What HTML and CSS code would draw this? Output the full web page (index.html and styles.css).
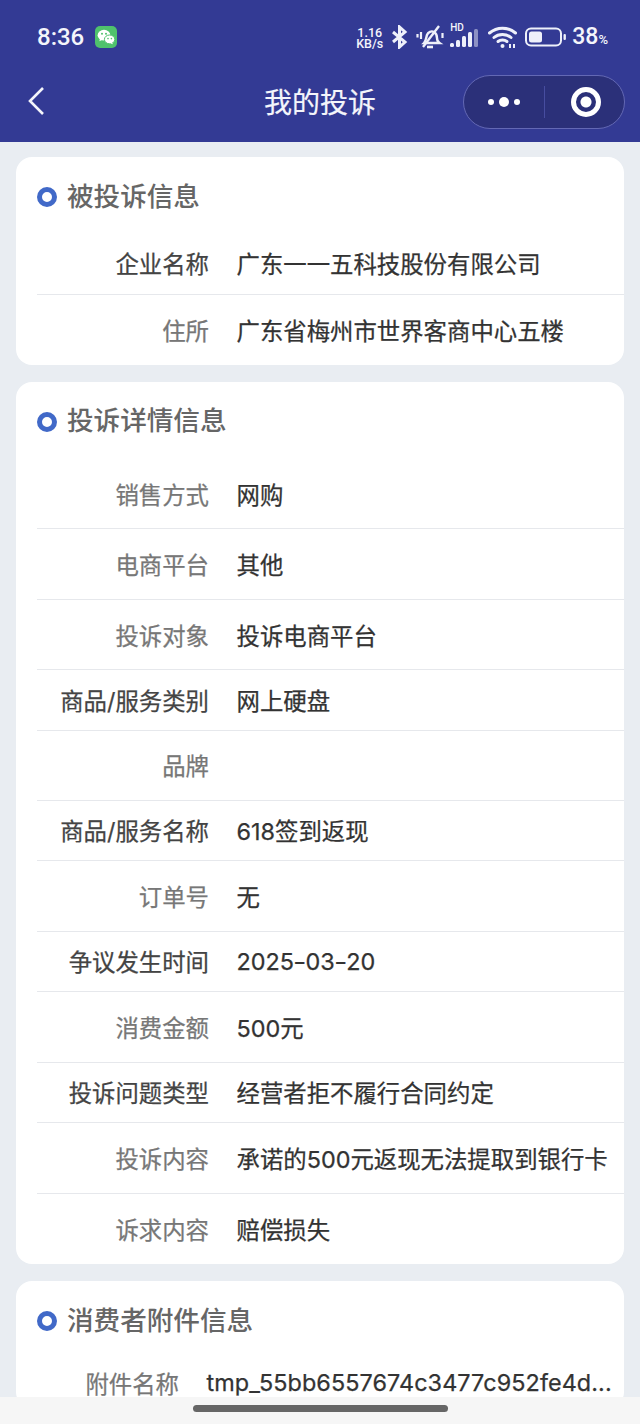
FILE: index.html
```html
<!DOCTYPE html>
<html lang="zh-CN">

<head>
    <meta charset="UTF-8">
    <meta name="viewport" content="width=device-width, initial-scale=1.0">
    <title>我的投诉</title>
    <link rel="stylesheet" href="styles.css">
</head>

<body>

    <div class="top-bar">
        <div class="status-bar">
            <div class="status-left">
                <span class="clock">8:36</span>
                <svg class="wechat" width="22" height="22" viewBox="0 0 22 22">
                    <rect width="22" height="22" rx="5" fill="#4fc26c" />
                    <ellipse cx="9" cy="9.200" rx="6.400" ry="5.400" fill="#fff" />
                    <path d="M5 12.500l-.6 2.800 3-1.600z" fill="#fff" />
                    <ellipse cx="14.600" cy="13.400" rx="5.200" ry="4.400" fill="#fff" stroke="#4fc26c" stroke-width="1" />
                    <path d="M17 16.500l1 1.800-2.800-1z" fill="#fff" />
                    <circle cx="7" cy="7.800" r="1" fill="#4fc26c" />
                    <circle cx="11" cy="7.800" r="1" fill="#4fc26c" />
                    <circle cx="13" cy="12.600" r=".8" fill="#4fc26c" />
                    <circle cx="16.400" cy="12.600" r=".8" fill="#4fc26c" />
                </svg>
            </div>
            <div class="status-right">
                <div class="net-speed">1.16<br>KB/s</div>
                <!-- bluetooth -->
                <svg class="wide-gap" width="17" height="24" viewBox="0 0 17 24" fill="none" stroke="#eef0fa" stroke-width="3">
                    <path d="M2 7l12 10-5.500 5V2L14 7 2 17" />
                </svg>
                <!-- muted bell -->
                <svg class="wide-gap" width="28" height="24" viewBox="0 0 28 24" fill="none" stroke="#eef0fa" stroke-width="2.400">
                    <path d="M8 18c2-2 2-5 3-8 1-3 4.500-4.500 7-3 2.500 1.500 3 3.500 3 6 0 2.500 1 4 2.500 5z" />
                    <path d="M11 22h6" stroke-width="2.600" />
                    <path d="M7 22L23 1" />
                    <path d="M5 7v7M1.500 9v3.500M26.500 8v5" stroke-width="2.200" />
                </svg>
                <!-- HD signal -->
                <div class="signal">
                    <span class="hd">HD</span>
                    <svg width="30" height="20" viewBox="0 0 30 20">
                        <rect x="0" y="14" width="4" height="4" rx="1.500" fill="#eef0fa" />
                        <rect x="6" y="11" width="4" height="7" rx="1.500" fill="#eef0fa" />
                        <rect x="12" y="7" width="4" height="11" rx="1.500" fill="#eef0fa" />
                        <rect x="18" y="3" width="4" height="15" rx="1.500" fill="#eef0fa" />
                        <rect x="24" y="0" width="4" height="18" rx="1.500" fill="#8d91c4" />
                    </svg>
                </div>
                <!-- wifi -->
                <svg class="wide-gap" width="29" height="24" viewBox="0 0 29 24" fill="none" stroke="#eef0fa" stroke-width="3" stroke-linecap="round">
                    <path d="M1.500 8c7.500-6.500 18.500-6.500 26 0" />
                    <path d="M6 12.500c4.500-4 12.500-4 17 0" />
                    <path d="M10 16.500c2.500-2 6.500-2 9 0" />
                    <circle cx="14.500" cy="21" r="2" fill="#eef0fa" stroke="none" />
                    <path d="M22 19v4M26 19v4" stroke-width="2" stroke-linecap="butt" />
                </svg>
                <!-- battery -->
                <svg class="wide-gap" width="41" height="20" viewBox="0 0 41 20">
                    <rect x="1" y="1.500" width="35" height="17" rx="5" fill="none" stroke="#eef0fa" stroke-width="2" />
                    <rect x="4" y="4.500" width="13" height="11" rx="2.500" fill="#eef0fa" />
                    <rect x="38.500" y="7" width="2.400" height="6" rx="1" fill="#eef0fa" />
                </svg>
                <span class="battery-num">38<small>%</small></span>
            </div>
        </div>
        <div class="nav-bar">
            <svg class="nav-back" width="18" height="30" viewBox="0 0 18 30" fill="none" stroke="#f4f5fb" stroke-width="2.600">
                <path d="M16 2L3 15l13 13" />
            </svg>
            <h1 class="nav-title">我的投诉</h1>
            <div class="capsule">
                <div class="capsule-dots"><i></i><b></b><i></i></div>
                <div class="capsule-line"></div>
                <div class="capsule-target"></div>
            </div>
        </div>
    </div>

    <div class="content">
        <div class="card">
            <h3 class="card-title"><span class="dot"></span><span class="title-text">被投诉信息</span></h3>
            <div class="row dark">
                <label>企业名称</label>
                <p>广东一一五科技股份有限公司</p>
            </div>
            <div class="row dark tall last">
                <label class="gray">住所</label>
                <p>广东省梅州市世界客商中心五楼</p>
            </div>
        </div>

        <div class="card">
            <h3 class="card-title"><span class="dot"></span><span class="title-text">投诉详情信息</span></h3>
            <div class="row tall">
                <label>销售方式</label>
                <p>网购</p>
            </div>
            <div class="row tall">
                <label>电商平台</label>
                <p>其他</p>
            </div>
            <div class="row tall">
                <label>投诉对象</label>
                <p>投诉电商平台</p>
            </div>
            <div class="row dark">
                <label>商品/服务类别</label>
                <p>网上硬盘</p>
            </div>
            <div class="row tall">
                <label>品牌</label>
                <p></p>
            </div>
            <div class="row dark">
                <label>商品/服务名称</label>
                <p>618签到返现</p>
            </div>
            <div class="row tall">
                <label>订单号</label>
                <p>无</p>
            </div>
            <div class="row dark">
                <label>争议发生时间</label>
                <p>2025<span class="dash">-</span>03<span class="dash">-</span>20</p>
            </div>
            <div class="row tall">
                <label>消费金额</label>
                <p>500元</p>
            </div>
            <div class="row dark">
                <label>投诉问题类型</label>
                <p>经营者拒不履行合同约定</p>
            </div>
            <div class="row tall">
                <label>投诉内容</label>
                <p>承诺的500元返现无法提取到银行卡</p>
            </div>
            <div class="row tall last">
                <label>诉求内容</label>
                <p>赔偿损失</p>
            </div>
        </div>

        <div class="card">
            <h3 class="card-title"><span class="dot"></span><span class="title-text">消费者附件信息</span></h3>
            <div class="row attach">
                <label>附件名称</label>
                <p>tmp_55bb6557674c3477c952fe4d...</p>
            </div>
        </div>
    </div>

    <div class="home-bar"><span></span></div>

</body>

</html>
```

FILE: styles.css
```css
* {
    box-sizing: border-box;
}

body,
h1,
h3,
p {
    margin: 0;
    padding: 0;
}

body {
    position: relative;
    height: 1424px;
    overflow: hidden;
    background-color: #e9edf2;
    font-family: Inter, "Noto Sans CJK SC", sans-serif;
    color: #333;
}

.top-bar {
    height: 142px;
    background-color: #333a94;
    color: #f4f5fb;
}

.status-bar {
    display: flex;
    justify-content: space-between;
    align-items: center;
    height: 73px;
    padding: 0 32px 0 37px;
    font-family: Roboto, sans-serif;
    font-weight: 500;
}

.status-left {
    display: flex;
    align-items: center;
    gap: 11px;
}

.clock {
    font-size: 24px;
}

.status-right {
    display: flex;
    align-items: center;
    gap: 6px;
}

.wide-gap {
    margin-left: 2px;
}

.net-speed {
    margin-top: 2px;
    font-size: 12.500px;
    line-height: 11px;
    text-align: center;
}

.signal {
    position: relative;
    display: flex;
    align-items: flex-end;
    width: 30px;
    height: 24px;
}

.signal .hd {
    position: absolute;
    left: 0;
    top: -3px;
    font-size: 10px;
    line-height: 12px;
}

.battery-num {
    font-size: 23px;
}

.battery-num small {
    font-size: 13px;
}

.nav-bar {
    position: relative;
    display: flex;
    justify-content: center;
    height: 69px;
}

.nav-back {
    position: absolute;
    left: 27px;
    top: 13px;
}

.nav-title {
    font-size: 28px;
    font-weight: 400;
    line-height: 61px;
    -webkit-text-stroke: .2px #f4f5fb;
}

.capsule {
    position: absolute;
    right: 15px;
    top: 2px;
    display: flex;
    align-items: center;
    width: 162px;
    height: 54px;
    border: 1px solid #6368b4;
    border-radius: 27px;
    background-color: #2b3079;
}

.capsule-dots {
    display: flex;
    align-items: center;
    justify-content: center;
    gap: 5px;
    width: 80px;
}

.capsule-dots i,
.capsule-dots b {
    display: block;
    border-radius: 50%;
    background-color: #fff;
}

.capsule-dots i {
    width: 6px;
    height: 6px;
}

.capsule-dots b {
    width: 10px;
    height: 10px;
}

.capsule-line {
    width: 1px;
    height: 32px;
    background-color: #474da0;
}

.capsule-target {
    width: 30px;
    height: 30px;
    margin-left: 26px;
    border: 5px solid #fff;
    border-radius: 50%;
    background: radial-gradient(circle, #fff 0 5px, transparent 6px);
}

.content {
    padding: 15px 16px 0;
}

.card {
    margin-bottom: 17px;
    padding-left: 20.500px;
    border-radius: 16px;
    background-color: #fff;
}

.card-title {
    display: flex;
    align-items: center;
    height: 77px;
    padding-top: 3px;
    font-size: 26.600px;
    font-weight: 500;
    color: #666;
}

.title-text {
    margin-top: -6px;
}

/* 标题前的小圆环 */
.dot {
    width: 20px;
    height: 20px;
    margin-right: 10.500px;
    border: 5px solid #4169c8;
    border-radius: 50%;
}

.row {
    display: flex;
    align-items: center;
    height: 60.500px;
    padding-bottom: .6px;
    border-bottom: 1px solid #e6e8ec;
    font-size: 23.400px;
    -webkit-text-stroke: .25px;
}

.row.tall {
    height: 70.400px;
    padding-top: .4px;
    padding-bottom: 0;
}

.row.last {
    border-bottom: 0;
}

.row label {
    flex: none;
    width: 172.500px;
    text-align: right;
    color: #777;
}

.row.dark label {
    color: #444;
}

.row.dark label.gray {
    color: #777;
}

.row p {
    flex: 1;
    margin-left: 27.500px;
    color: #333;
}

/* 日期里的连接号比字体自带的更长 */
.dash {
    display: inline-block;
    width: 11.500px;
    text-align: center;
    transform: scaleX(1.200);
}

.row.attach {
    height: 50px;
    border-bottom: 0;
}

.row.attach label {
    width: 142.500px;
}

.row.attach p {
    white-space: nowrap;
    letter-spacing: .08px;
}

.home-bar {
    position: absolute;
    left: 0;
    bottom: 0;
    width: 100%;
    height: 27px;
    background-color: #f6f6f6;
}

.home-bar span {
    display: block;
    width: 255px;
    height: 7px;
    margin: 8px auto 0;
    border-radius: 4px;
    background-color: #666;
}
```
